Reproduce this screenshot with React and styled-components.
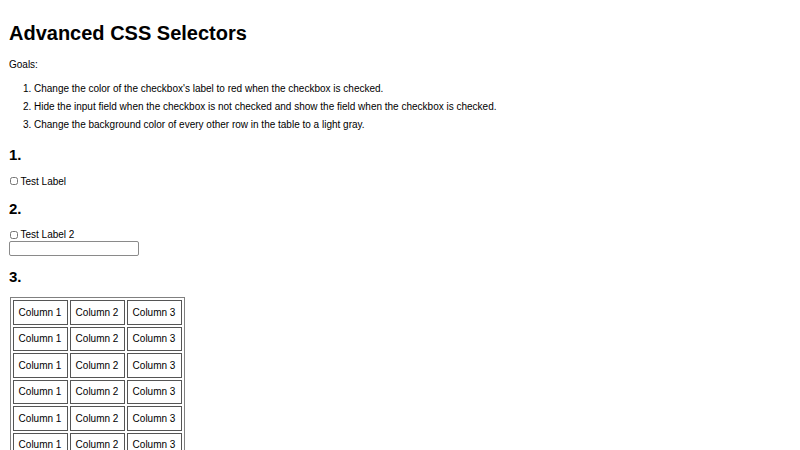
import React from 'react';
import styled, { createGlobalStyle } from 'styled-components';

const GlobalStyle = createGlobalStyle`
  body {
    margin: 9px;
    font-family: "Liberation Sans", Arial, sans-serif;
    font-size: 10px;
    color: #000;
    background: #fff;
  }
`;

const Title = styled.h1`
  font-size: 20px;
  font-weight: bold;
  margin: 13.4px 0;
`;

const Text = styled.p`
  margin: 10px 0;
`;

const Goals = styled.ol`
  margin: 10px 0;
  padding-left: 25px;
`;

const Goal = styled.li`
  line-height: 18px;
`;

const Section = styled.h2`
  font-size: 15px;
  font-weight: bold;
  margin: 12.45px 0;
`;

const CheckRow = styled.div`
  display: flex;
  align-items: center;
  height: 11.5px;
`;

const Check = styled.input.attrs({ type: 'checkbox' })`
  width: 8px;
  height: 8px;
  margin: 0 2.5px 0 1px;
`;

const Field = styled.input.attrs({ type: 'text' })`
  display: block;
  box-sizing: border-box;
  width: 130px;
  height: 15px;
  margin: 0;
  padding: 1px 2px;
  border: 1px solid #8a8a8a;
  border-radius: 2px;
  font: inherit;
`;

const Table = styled.table`
  margin: 0 0 0 0.5px;
  border: 1px solid #808080;
  border-spacing: 2px;
`;

const Cell = styled.td`
  border: 1px solid #555;
  padding: 5.5px 5.1px;
  line-height: 11.5px;
`;

const rows = [1, 2, 3, 4, 5, 6];

export default function App() {
  return (
    <>
      <GlobalStyle />
      <Title>Advanced CSS Selectors</Title>
      <Text>Goals:</Text>
      <Goals>
        <Goal>Change the color of the checkbox's label to red when the checkbox is checked.</Goal>
        <Goal>Hide the input field when the checkbox is not checked and show the field when the checkbox is checked.</Goal>
        <Goal>Change the background color of every other row in the table to a light gray.</Goal>
      </Goals>
      <Section>1.</Section>
      <CheckRow>
        <Check id="c1" />
        <label htmlFor="c1">Test Label</label>
      </CheckRow>
      <Section>2.</Section>
      <CheckRow>
        <Check id="c2" />
        <label htmlFor="c2">Test Label 2</label>
      </CheckRow>
      <Field />
      <Section>3.</Section>
      <Table>
        <tbody>
          {rows.map((r) => (
            <tr key={r}>
              <Cell>Column 1</Cell>
              <Cell>Column 2</Cell>
              <Cell>Column 3</Cell>
            </tr>
          ))}
        </tbody>
      </Table>
    </>
  );
}
